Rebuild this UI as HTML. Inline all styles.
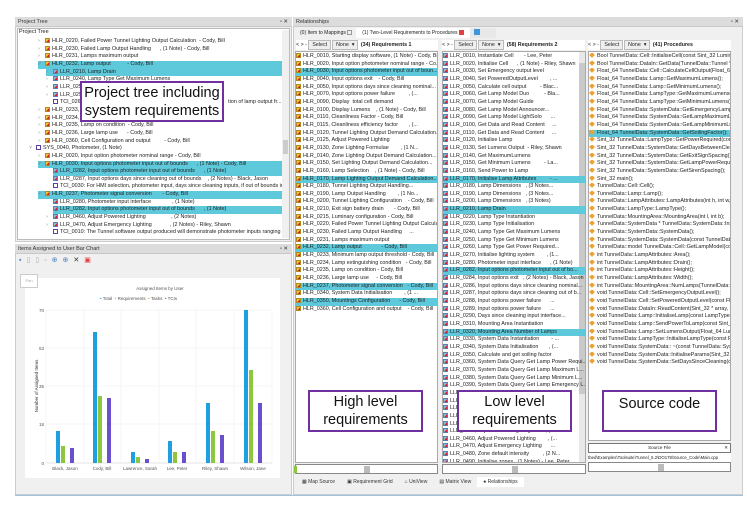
<!DOCTYPE html>
<html><head><meta charset="utf-8">
<style>
*{margin:0;padding:0;box-sizing:border-box}
body{width:747px;height:510px;background:#fff;font-family:"Liberation Sans",sans-serif;font-size:5.4px;color:#222;position:relative;overflow:hidden}
.a{position:absolute}
.hdr{background:#dcdcdc;border-bottom:1px solid #c8c8c8;height:10px;line-height:10px;padding-left:3px;font-size:5.5px;color:#333}
.list{position:absolute;background:#fff;border:1px solid #aaa;overflow:hidden}
.r{height:7.67px;line-height:7.67px;white-space:nowrap;overflow:hidden;position:relative}
.h{background:#5ec9db}
.i{display:inline-block;width:5px;height:5px;vertical-align:-1px;margin-right:2px;background:linear-gradient(135deg,#f3c53a 55%,#d2232a 55%);border:0.5px solid #b08a20}
.l{background:linear-gradient(135deg,#8fb8e0 55%,#d2232a 55%);border-color:#5a7fb0}
.t{background:#fff;border:1px solid #5a3fa0}
.p{display:inline-block;width:4px;height:4px;background:#f0a030;transform:rotate(45deg);margin:0 3px 0 1px;vertical-align:0}
.ar{display:inline-block;width:7px;color:#888}
.box{position:absolute;border:2px solid #7030a0;background:#fff;font-size:14.5px;text-align:center;color:#111;line-height:18px;white-space:nowrap;padding-top:1px}
.tb{position:absolute;height:10px;line-height:10px;font-size:5.3px;background:#fff}
.btn{display:inline-block;border:1px solid #bbb;background:#eee;padding:0 3px;line-height:8px;margin-right:1px}
.tab{display:inline-block;padding:0 6px;line-height:10px;font-size:5px;color:#333}
</style></head><body>

<!-- Project tree panel -->
<div class="a" style="left:15px;top:17px;width:277px;height:225px;background:#f0f0f0;border:1px solid #ccc"></div>
<div class="a hdr" style="left:15px;top:17px;width:277px">Project Tree<span style="position:absolute;right:4px">▫ ✕</span></div>
<div class="a" style="left:17px;top:28px;width:273px;height:212px;background:#fff;border:1px solid #bbb"></div>
<div class="a" style="left:19px;top:29px;font-size:5.5px">Project Tree</div>
<div class="a" style="left:282px;top:30px;width:7px;height:208px;background:#f0f0f0"></div>
<div class="a" style="left:283px;top:140px;width:5px;height:14px;background:#ccc"></div>
<div class="a" style="left:17px;top:38px;width:265px">
<div class="r" style="padding-left:21px"><span class="ar">›</span><span class="i"></span>HLR_0220, Failed Power Tunnel Lighting Output Calculation &nbsp;- Cody, Bill</div>
<div class="r" style="padding-left:21px"><span class="ar">›</span><span class="i"></span>HLR_0230, Failed Lamp Output Handling &nbsp;&nbsp;&nbsp;&nbsp;&nbsp;, (1 Note) - Cody, Bill</div>
<div class="r" style="padding-left:21px"><span class="ar">›</span><span class="i"></span>HLR_0231, Lamps maximum output</div>
<div class="r h" style="margin-left:21px"><span class="ar">˅</span><span class="i"></span>HLR_0232, Lamp output &nbsp;&nbsp;&nbsp;&nbsp;&nbsp;&nbsp;&nbsp;&nbsp;&nbsp;&nbsp;- Cody, Bill</div>
<div class="r h" style="margin-left:29px"><span class="ar">›</span><span class="i l"></span>LLR_0210, Lamp Drain</div>
<div class="r" style="padding-left:29px"><span class="ar">›</span><span class="i l"></span>LLR_0240, Lamp Type Get Maximum Lumens</div>
<div class="r" style="padding-left:29px"><span class="ar">›</span><span class="i l"></span>LLR_0250</div>
<div class="r" style="padding-left:29px"><span class="ar">›</span><span class="i l"></span>LLR_0290</div>
<div class="r" style="padding-left:36px"><span class="i t"></span>TCI_0260 <span style="padding-left:143px">tion of lamp output fr...</span></div>
<div class="r" style="padding-left:21px"><span class="ar">›</span><span class="i"></span>HLR_0233, Minimum lamp output threshold</div>
<div class="r" style="padding-left:21px"><span class="ar">›</span><span class="i"></span>HLR_0234, Lamp extinguishing condition</div>
<div class="r" style="padding-left:21px"><span class="ar">›</span><span class="i"></span>HLR_0235, Lamp on condition &nbsp;- Cody, Bill</div>
<div class="r" style="padding-left:21px"><span class="ar">›</span><span class="i"></span>HLR_0236, Large lamp use &nbsp;&nbsp;&nbsp;&nbsp;&nbsp;- Cody, Bill</div>
<div class="r" style="padding-left:21px"><span class="ar">›</span><span class="i"></span>HLR_0360, Cell Configuration and output &nbsp;&nbsp;&nbsp;&nbsp;&nbsp;&nbsp;&nbsp;&nbsp;- Cody, Bill</div>
<div class="r" style="padding-left:12px"><span class="ar">˅</span><span class="i t"></span>SYS_0040, Photometer, (1 Note)</div>
<div class="r" style="padding-left:21px"><span class="ar">›</span><span class="i"></span>HLR_0020, Input option photometer nominal range - Cody, Bill</div>
<div class="r h" style="margin-left:21px"><span class="ar">˅</span><span class="i"></span>HLR_0030, Input options photometer input out of bounds &nbsp;&nbsp;&nbsp;&nbsp;&nbsp;, (1 Note) - Cody, Bill</div>
<div class="r h" style="margin-left:36px"><span class="i l"></span>LLR_0282, Input options photometer input out of bounds &nbsp;&nbsp;&nbsp;&nbsp;&nbsp;, (1 Note)</div>
<div class="r" style="padding-left:36px"><span class="i l"></span>LLR_0287, Input options days since cleaning out of bounds &nbsp;&nbsp;&nbsp;, (2 Notes) - Black, Jason</div>
<div class="r" style="padding-left:36px"><span class="i t"></span>TCI_0030: For HMI selection, photometer input, days since cleaning inputs, if out of bounds in...</div>
<div class="r h" style="margin-left:21px"><span class="ar">˅</span><span class="i"></span>HLR_0237, Photometer signal conversion &nbsp;&nbsp;&nbsp;&nbsp;&nbsp;&nbsp;- Cody, Bill</div>
<div class="r" style="padding-left:36px"><span class="i l"></span>LLR_0280, Photometer input interface &nbsp;&nbsp;&nbsp;&nbsp;&nbsp;&nbsp;&nbsp;&nbsp;&nbsp;&nbsp;&nbsp;&nbsp;&nbsp;, (1 Note)</div>
<div class="r h" style="margin-left:36px"><span class="i l"></span>LLR_0282, Input options photometer input out of bounds &nbsp;&nbsp;&nbsp;&nbsp;&nbsp;, (1 Note)</div>
<div class="r" style="padding-left:29px"><span class="ar">›</span><span class="i l"></span>LLR_0460, Adjust Powered Lighting &nbsp;&nbsp;&nbsp;&nbsp;&nbsp;&nbsp;&nbsp;&nbsp;&nbsp;&nbsp;&nbsp;&nbsp;&nbsp;&nbsp;&nbsp;&nbsp;, (2 Notes)</div>
<div class="r" style="padding-left:29px"><span class="ar">›</span><span class="i l"></span>LLR_0470, Adjust Emergency Lighting &nbsp;&nbsp;&nbsp;&nbsp;&nbsp;&nbsp;&nbsp;&nbsp;&nbsp;&nbsp;&nbsp;, (2 Notes) - Riley, Shawn</div>
<div class="r" style="padding-left:36px"><span class="i t"></span>TCI_0010: The Tunnel software output produced will demonstrate photometer inputs ranging f...</div>
</div>
<div class="box" style="left:80px;top:81px;width:144px;height:41px">Project tree including<br>system requirements</div>

<!-- Chart panel -->
<div class="a" style="left:15px;top:244px;width:277px;height:251px;background:#f0f0f0;border:1px solid #ccc"></div>
<div class="a hdr" style="left:15px;top:244px;width:277px">Items Assigned to User Bar Chart<span style="position:absolute;right:4px">▫ ✕</span></div>
<div class="a" style="left:19px;top:256px;font-size:7px;letter-spacing:5px;color:#4a7fc0">▪<span style="color:#aaa">▯▯▫</span>⊕⊕<span style="color:#333">✕</span><span style="color:#e04040">▣</span></div>
<div class="a" style="left:25px;top:278px;width:255px;height:200px;background:#fff"></div>
<div class="a" style="left:20px;top:274px;width:18px;height:14px;border:1px solid #ccc;background:#fff;font-size:4px;color:#aaa;text-align:center;line-height:12px">Pan</div>
<div class="a" style="left:110px;top:286px;width:100px;text-align:center;font-size:4.5px;color:#555">Assigned Items by User</div>
<div class="a" style="left:100px;top:296px;font-size:4.5px;color:#555"><span style="color:#1ea0e0">•</span> Total &nbsp;<span style="color:#8dc63f">•</span> Requirements &nbsp;<span style="color:#f0a030">•</span> Tasks &nbsp;<span style="color:#6a4fcf">•</span> TCIs</div>
<svg class="a" style="left:0;top:0" width="292" height="495">
<g stroke="#eee" stroke-width="0.6">
<line x1="46" y1="310" x2="272" y2="310"/><line x1="46" y1="348" x2="272" y2="348"/><line x1="46" y1="386" x2="272" y2="386"/><line x1="46" y1="424" x2="272" y2="424"/><line x1="46" y1="463" x2="272" y2="463" stroke="#ccc"/>
<line x1="46" y1="310" x2="46" y2="463"/><line x1="84" y1="310" x2="84" y2="463"/><line x1="121" y1="310" x2="121" y2="463"/><line x1="159" y1="310" x2="159" y2="463"/><line x1="196" y1="310" x2="196" y2="463"/><line x1="234" y1="310" x2="234" y2="463"/><line x1="272" y1="310" x2="272" y2="463"/>
</g>
<g fill="#1ea0e0"><rect x="56" y="431" width="4" height="32"/><rect x="93" y="332" width="4" height="131"/><rect x="131" y="452" width="4" height="11"/><rect x="168" y="441" width="4" height="22"/><rect x="206" y="403" width="4" height="60"/><rect x="244" y="310" width="4" height="153"/></g>
<g fill="#8dc63f"><rect x="61" y="446" width="4" height="17"/><rect x="98" y="396" width="4" height="67"/><rect x="136" y="457" width="4" height="6"/><rect x="173" y="452" width="4" height="11"/><rect x="211" y="431" width="4" height="32"/><rect x="249" y="370" width="4" height="93"/></g>
<g fill="#6a4fcf"><rect x="70" y="448" width="4" height="15"/><rect x="107" y="398" width="4" height="65"/><rect x="145" y="459" width="4" height="4"/><rect x="182" y="452" width="4" height="11"/><rect x="220" y="435" width="4" height="28"/><rect x="258" y="403" width="4" height="60"/></g>
<g font-family="Liberation Sans" font-size="4.5" fill="#555" text-anchor="end"><text x="44" y="312">70</text><text x="44" y="350">53</text><text x="44" y="388">35</text><text x="44" y="426">18</text><text x="44" y="465">0</text></g>
<g font-family="Liberation Sans" font-size="4.5" fill="#555" text-anchor="middle"><text x="65" y="470">Black, Jason</text><text x="102" y="470">Cody, Bill</text><text x="140" y="470">Lawrence, Sarah</text><text x="177" y="470">Lee, Peter</text><text x="215" y="470">Riley, Shawn</text><text x="253" y="470">Wilson, Jane</text></g>
<text transform="translate(38,386) rotate(-90)" font-family="Liberation Sans" font-size="4.5" fill="#333" text-anchor="middle">Number of Assigned Items</text>
</svg>

<!-- Relationships -->
<div class="a" style="left:293px;top:17px;width:450px;height:478px;background:#f0f0f0;border:1px solid #ccc"></div>
<div class="a hdr" style="left:293px;top:17px;width:450px">Relationships<span style="position:absolute;right:4px">▫ ✕</span></div>
<div class="a" style="left:296px;top:28px;height:10px;line-height:10px;font-size:5px">
<span style="display:inline-block;padding:0 4px">(0) Item to Mappings <span style="display:inline-block;width:5px;height:5px;border:1px solid #999;vertical-align:-1px"></span></span><span style="display:inline-block;padding:0 6px;background:#fff">(1) Two-Level Requirements to Procedures <span style="display:inline-block;width:5px;height:5px;background:#e04040;vertical-align:-1px"></span></span><span style="display:inline-block;padding:0 4px;background:#e8e8e8;width:26px"><span style="display:inline-block;width:6px;height:6px;background:#3a9ad9;vertical-align:-1px"></span></span>
</div>
<div class="tb" style="left:296px;top:40px;width:142px">&lt; &gt; - <span class="btn">Select</span><span class="btn">None &nbsp;▾</span> <b>(34) Requirements 1</b></div>
<div class="tb" style="left:442px;top:40px;width:143px">&lt; &gt; - <span class="btn">Select</span><span class="btn">None &nbsp;▾</span> <b>(58) Requirements 2</b></div>
<div class="tb" style="left:588px;top:40px;width:143px">&lt; &gt; - <span class="btn">Select</span><span class="btn">None &nbsp;▾</span> <b>(41) Procedures</b></div>

<div class="list" style="left:295px;top:51px;width:143px;height:412px;padding-top:1px">
<div class="r"><span class="i"></span>HLR_0010, Starting display software, (1 Note) - Cody, Bill</div>
<div class="r"><span class="i"></span>HLR_0020, Input option photometer nominal range - Co...</div>
<div class="r h"><span class="i"></span>HLR_0030, Input options photometer input out of boun...</div>
<div class="r"><span class="i"></span>HLR_0040, Input options exit &nbsp;&nbsp;&nbsp;- Cody, Bill</div>
<div class="r"><span class="i"></span>HLR_0050, Input options days since cleaning nominal...</div>
<div class="r"><span class="i"></span>HLR_0070, Input options power failure &nbsp;&nbsp;&nbsp;&nbsp;&nbsp;&nbsp;&nbsp;&nbsp;, (...</div>
<div class="r"><span class="i"></span>HLR_0090, Display &nbsp;total cell demand</div>
<div class="r"><span class="i"></span>HLR_0100, Display Lumens &nbsp;&nbsp;&nbsp;, (1 Note) - Cody, Bill</div>
<div class="r"><span class="i"></span>HLR_0110, Cleanliness Factor - Cody, Bill</div>
<div class="r"><span class="i"></span>HLR_0115, Cleanliness efficiency factor &nbsp;&nbsp;&nbsp;&nbsp;&nbsp;&nbsp;, (...</div>
<div class="r"><span class="i"></span>HLR_0120, Tunnel Lighting Output Demand Calculation...</div>
<div class="r"><span class="i"></span>HLR_0125, Adjust Powered Lighting</div>
<div class="r"><span class="i"></span>HLR_0130, Zone Lighting Formulae &nbsp;&nbsp;&nbsp;&nbsp;&nbsp;&nbsp;&nbsp;, (1 N...</div>
<div class="r"><span class="i"></span>HLR_0140, Zone Lighting Output Demand Calculation...</div>
<div class="r"><span class="i"></span>HLR_0150, Set Lighting Output Demand Calculation...</div>
<div class="r"><span class="i"></span>HLR_0160, Lamp Selection &nbsp;&nbsp;&nbsp;, (1 Note) - Cody, Bill</div>
<div class="r h"><span class="i"></span>HLR_0170, Lamp Lighting Output Demand Calculation...</div>
<div class="r"><span class="i"></span>HLR_0180, Tunnel Lighting Output Handling...</div>
<div class="r"><span class="i"></span>HLR_0190, Lamp Output Handling &nbsp;&nbsp;&nbsp;&nbsp;&nbsp;&nbsp;&nbsp;, (1 No...</div>
<div class="r"><span class="i"></span>HLR_0200, Tunnel Lighting Configuration &nbsp;&nbsp;&nbsp;- Cody, Bill</div>
<div class="r"><span class="i"></span>HLR_0210, Exit sign battery drain &nbsp;&nbsp;&nbsp;&nbsp;&nbsp;&nbsp;- Cody, Bill</div>
<div class="r"><span class="i"></span>HLR_0215, Luminary configuration - Cody, Bill</div>
<div class="r"><span class="i"></span>HLR_0220, Failed Power Tunnel Lighting Output Calcula...</div>
<div class="r"><span class="i"></span>HLR_0230, Failed Lamp Output Handling &nbsp;&nbsp;&nbsp;&nbsp;...</div>
<div class="r"><span class="i"></span>HLR_0231, Lamps maximum output</div>
<div class="r h"><span class="i"></span>HLR_0232, Lamp output &nbsp;&nbsp;&nbsp;&nbsp;&nbsp;&nbsp;&nbsp;&nbsp;&nbsp;&nbsp;&nbsp;&nbsp;- Cody, Bill</div>
<div class="r"><span class="i"></span>HLR_0233, Minimum lamp output threshold - Cody, Bill</div>
<div class="r"><span class="i"></span>HLR_0234, Lamp extinguishing condition &nbsp;&nbsp;- Cody, Bill</div>
<div class="r"><span class="i"></span>HLR_0235, Lamp on condition - Cody, Bill</div>
<div class="r"><span class="i"></span>HLR_0236, Large lamp use &nbsp;&nbsp;&nbsp;&nbsp;- Cody, Bill</div>
<div class="r h"><span class="i"></span>HLR_0237, Photometer signal conversion &nbsp;&nbsp;- Cody, Bill</div>
<div class="r"><span class="i"></span>HLR_0340, System Data Initialisation &nbsp;&nbsp;&nbsp;&nbsp;&nbsp;&nbsp;&nbsp;, (1 ...</div>
<div class="r h"><span class="i"></span>HLR_0350, Mountings Configuration &nbsp;&nbsp;&nbsp;&nbsp;&nbsp;- Cody, Bill</div>
<div class="r"><span class="i"></span>HLR_0360, Cell Configuration and output &nbsp;&nbsp;&nbsp;- Cody, Bill</div>
</div>

<div class="list" style="left:442px;top:51px;width:144px;height:412px;padding-top:1px">
<div class="a" style="right:0;top:0;width:6px;height:410px;background:#e8e8e8"></div>
<div class="a" style="right:0;top:11px;width:6px;height:331px;background:#c9c9c9"></div>
<div class="r"><span class="i l"></span>LLR_0010, Instantiate Cell &nbsp;&nbsp;&nbsp;&nbsp;&nbsp;&nbsp;- Lee, Peter</div>
<div class="r"><span class="i l"></span>LLR_0020, Initialise Cell &nbsp;&nbsp;&nbsp;&nbsp;&nbsp;, (1 Note) - Riley, Shawn</div>
<div class="r"><span class="i l"></span>LLR_0030, Set Emergency output level</div>
<div class="r"><span class="i l"></span>LLR_0040, Set PoweredOutputLevel &nbsp;&nbsp;&nbsp;&nbsp;&nbsp;&nbsp;&nbsp;, ...</div>
<div class="r"><span class="i l"></span>LLR_0050, Calculate cell output &nbsp;&nbsp;&nbsp;&nbsp;&nbsp;&nbsp;&nbsp;&nbsp;- Blac...</div>
<div class="r"><span class="i l"></span>LLR_0060, Get Lamp Model Duo &nbsp;&nbsp;&nbsp;&nbsp;&nbsp;&nbsp;&nbsp;&nbsp;&nbsp;- Bla...</div>
<div class="r"><span class="i l"></span>LLR_0070, Get Lamp Model Guide</div>
<div class="r"><span class="i l"></span>LLR_0080, Get Lamp Model Announcer...</div>
<div class="r"><span class="i l"></span>LLR_0090, Get Lamp Model LightSolo &nbsp;&nbsp;&nbsp;&nbsp;&nbsp;...</div>
<div class="r"><span class="i l"></span>LLR_0100, Get Data and Read Content &nbsp;&nbsp;&nbsp;&nbsp;...</div>
<div class="r"><span class="i l"></span>LLR_0110, Get Data and Read Content &nbsp;&nbsp;&nbsp;&nbsp;...</div>
<div class="r"><span class="i l"></span>LLR_0120, Initialise Lamp</div>
<div class="r"><span class="i l"></span>LLR_0130, Set Lumens Output &nbsp;- Riley, Shawn</div>
<div class="r"><span class="i l"></span>LLR_0140, Get MaximumLumens</div>
<div class="r"><span class="i l"></span>LLR_0150, Get Minimum Lumens &nbsp;&nbsp;&nbsp;&nbsp;&nbsp;&nbsp;&nbsp;&nbsp;- La...</div>
<div class="r"><span class="i l"></span>LLR_0160, Send Power to Lamp</div>
<div class="r h"><span class="i l"></span>LLR_0170, Initialise Lamp Attributes &nbsp;&nbsp;&nbsp;&nbsp;&nbsp;&nbsp;&nbsp;&nbsp;- ...</div>
<div class="r"><span class="i l"></span>LLR_0180, Lamp Dimensions &nbsp;&nbsp;, (3 Notes...</div>
<div class="r"><span class="i l"></span>LLR_0190, Lamp Dimensions &nbsp;&nbsp;, (3 Notes...</div>
<div class="r"><span class="i l"></span>LLR_0200, Lamp Dimensions &nbsp;&nbsp;, (3 Notes)</div>
<div class="r h"><span class="i l"></span>LLR_0210, Lamp Drain</div>
<div class="r"><span class="i l"></span>LLR_0220, Lamp Type Instantiation</div>
<div class="r"><span class="i l"></span>LLR_0230, Lamp Type Initialisation</div>
<div class="r"><span class="i l"></span>LLR_0240, Lamp Type Get Maximum Lumens</div>
<div class="r"><span class="i l"></span>LLR_0250, Lamp Type Get Minimum Lumens</div>
<div class="r"><span class="i l"></span>LLR_0260, Lamp Type Get Power Required...</div>
<div class="r"><span class="i l"></span>LLR_0270, Initialise lighting system &nbsp;&nbsp;&nbsp;&nbsp;&nbsp;&nbsp;&nbsp;, (1...</div>
<div class="r"><span class="i l"></span>LLR_0280, Photometer input interface &nbsp;&nbsp;&nbsp;&nbsp;&nbsp;, (1 Note)</div>
<div class="r h"><span class="i l"></span>LLR_0282, Input options photometer input out of bo...</div>
<div class="r"><span class="i l"></span>LLR_0284, Input options exit &nbsp;&nbsp;, (2 Notes) - Black, Jason</div>
<div class="r"><span class="i l"></span>LLR_0286, Input options days since cleaning nominal...</div>
<div class="r"><span class="i l"></span>LLR_0287, Input options days since cleaning out of b...</div>
<div class="r"><span class="i l"></span>LLR_0288, Input options power failure &nbsp;&nbsp;&nbsp;&nbsp;&nbsp;...</div>
<div class="r"><span class="i l"></span>LLR_0289, Input options power failure &nbsp;&nbsp;&nbsp;&nbsp;&nbsp;...</div>
<div class="r"><span class="i l"></span>LLR_0290, Days since cleaning input interface...</div>
<div class="r"><span class="i l"></span>LLR_0310, Mounting Area Instantiation</div>
<div class="r h"><span class="i l"></span>LLR_0320, Mounting Area Number of Lamps</div>
<div class="r"><span class="i l"></span>LLR_0330, System Data Instantiation &nbsp;&nbsp;&nbsp;&nbsp;&nbsp;&nbsp;&nbsp;- ...</div>
<div class="r"><span class="i l"></span>LLR_0340, System Data Initialisation &nbsp;&nbsp;&nbsp;&nbsp;&nbsp;&nbsp;, (...</div>
<div class="r"><span class="i l"></span>LLR_0350, Calculate and get soiling factor</div>
<div class="r"><span class="i l"></span>LLR_0360, System Data Query Get Lamp Power Requi...</div>
<div class="r"><span class="i l"></span>LLR_0370, System Data Query Get Lamp Maximum L...</div>
<div class="r"><span class="i l"></span>LLR_0380, System Data Query Get Lamp Minimum L...</div>
<div class="r"><span class="i l"></span>LLR_0390, System Data Query Get Lamp Emergency L...</div>
<div class="r"><span class="i l"></span>LLR_0400, System Data Query</div>
<div class="r"><span class="i l"></span>LLR_0410, System Data Query</div>
<div class="r"><span class="i l"></span>LLR_0420, Adjust Lighting</div>
<div class="r"><span class="i l"></span>LLR_0430, Adjust Lighting</div>
<div class="r"><span class="i l"></span>LLR_0440, Adjust Lighting</div>
<div class="r"><span class="i l"></span>LLR_0450, Adjust Tunnel Lighting &nbsp;&nbsp;&nbsp;&nbsp;&nbsp;&nbsp;&nbsp;&nbsp;&nbsp;, (2 ...</div>
<div class="r"><span class="i l"></span>LLR_0460, Adjust Powered Lighting &nbsp;&nbsp;&nbsp;&nbsp;&nbsp;&nbsp;&nbsp;, (...</div>
<div class="r"><span class="i l"></span>LLR_0470, Adjust Emergency Lighting &nbsp;&nbsp;&nbsp;&nbsp;&nbsp;...</div>
<div class="r"><span class="i l"></span>LLR_0480, Zone default intensity &nbsp;&nbsp;&nbsp;&nbsp;&nbsp;&nbsp;&nbsp;&nbsp;, (2 N...</div>
<div class="r"><span class="i l"></span>LLR_0490, Initialise zones &nbsp;&nbsp;(1 Notes) - Lee, Peter</div>
</div>

<div class="list" style="left:588px;top:51px;width:143px;height:390px;padding-top:1px">
<div class="r"><span class="p"></span>Bool TunnelData::Cell::InitialiseCell(const Sint_32 Luminai...</div>
<div class="r"><span class="p"></span>Bool TunnelData::DataIn::GetData(TunnelData::Tunnel * p...</div>
<div class="r"><span class="p"></span>Float_64 TunnelData::Cell::CalculateCellOutput(Float_64 L...</div>
<div class="r"><span class="p"></span>Float_64 TunnelData::Lamp::GetMaximumLumens();</div>
<div class="r"><span class="p"></span>Float_64 TunnelData::Lamp::GetMinimumLumens();</div>
<div class="r"><span class="p"></span>Float_64 TunnelData::LampType::GetMaximumLumens();</div>
<div class="r"><span class="p"></span>Float_64 TunnelData::LampType::GetMinimumLumens();</div>
<div class="r"><span class="p"></span>Float_64 TunnelData::SystemData::GetEmergencyLampLu...</div>
<div class="r"><span class="p"></span>Float_64 TunnelData::SystemData::GetLampMaximumLu...</div>
<div class="r"><span class="p"></span>Float_64 TunnelData::SystemData::GetLampMinimumLu...</div>
<div class="r h"><span class="p"></span>Float_64 TunnelData::SystemData::GetSoilingFactor();</div>
<div class="r"><span class="p"></span>Sint_32 TunnelData::LampType::GetPowerRequired(const ...</div>
<div class="r"><span class="p"></span>Sint_32 TunnelData::SystemData::GetDaysBetweenCleanin...</div>
<div class="r"><span class="p"></span>Sint_32 TunnelData::SystemData::GetExitSignSpacing();</div>
<div class="r"><span class="p"></span>Sint_32 TunnelData::SystemData::GetLampPowerRequired...</div>
<div class="r"><span class="p"></span>Sint_32 TunnelData::SystemData::GetSirenSpacing();</div>
<div class="r"><span class="p"></span>Sint_32 main();</div>
<div class="r"><span class="p"></span>TunnelData::Cell::Cell();</div>
<div class="r"><span class="p"></span>TunnelData::Lamp::Lamp();</div>
<div class="r"><span class="p"></span>TunnelData::LampAttributes::LampAttributes(int h, int w, ...</div>
<div class="r"><span class="p"></span>TunnelData::LampType::LampType();</div>
<div class="r"><span class="p"></span>TunnelData::MountingArea::MountingArea(int l, int b);</div>
<div class="r"><span class="p"></span>TunnelData::SystemData * TunnelData::SystemData::Insta...</div>
<div class="r"><span class="p"></span>TunnelData::SystemData::SystemData();</div>
<div class="r"><span class="p"></span>TunnelData::SystemData::SystemData(const TunnelData::...</div>
<div class="r"><span class="p"></span>TunnelData::model TunnelData::Cell::GetLampModel(con...</div>
<div class="r"><span class="p"></span>int TunnelData::LampAttributes::Area();</div>
<div class="r"><span class="p"></span>int TunnelData::LampAttributes::Drain();</div>
<div class="r"><span class="p"></span>int TunnelData::LampAttributes::Height();</div>
<div class="r"><span class="p"></span>int TunnelData::LampAttributes::Width();</div>
<div class="r"><span class="p"></span>int TunnelData::MountingArea::NumLamps(TunnelData::...</div>
<div class="r"><span class="p"></span>void TunnelData::Cell::SetEmergencyOutputLevel();</div>
<div class="r"><span class="p"></span>void TunnelData::Cell::SetPoweredOutputLevel(const Flo...</div>
<div class="r"><span class="p"></span>void TunnelData::DataIn::ReadContent(Sint_32 * array, ch...</div>
<div class="r"><span class="p"></span>void TunnelData::Lamp::InitialiseLamp(const LampTypel...</div>
<div class="r"><span class="p"></span>void TunnelData::Lamp::SendPowerToLamp(const Sint_3...</div>
<div class="r"><span class="p"></span>void TunnelData::Lamp::SetLumensOutput(Float_64 Lum...</div>
<div class="r"><span class="p"></span>void TunnelData::LampType::InitialiseLampType(const Fl...</div>
<div class="r"><span class="p"></span>void TunnelData::SystemData:: ~(const TunnelData::Syste...</div>
<div class="r"><span class="p"></span>void TunnelData::SystemData::InitialiseParams(Sint_32 * p...</div>
<div class="r"><span class="p"></span>void TunnelData::SystemData::SetDaysSinceCleaning(con...</div>
</div>
<div class="a" style="left:588px;top:443px;width:143px;height:10px;border:1px solid #777;background:#fff;text-align:center;line-height:8px;font-size:4.5px">Source File<span style="position:absolute;right:2px">✕</span></div>
<div class="a" style="left:588px;top:453px;width:143px;height:9px;background:#fff;font-size:4.3px;line-height:9px;white-space:nowrap;overflow:hidden">tbed\Examples\Toolsuite\Tunnel_5.2\DO178\Source_Code\Main.cpp</div>

<div class="box" style="left:308px;top:390px;width:115px;height:42px">High level<br>requirements</div>
<div class="box" style="left:457px;top:390px;width:115px;height:42px">Low level<br>requirements</div>
<div class="box" style="left:602px;top:390px;width:115px;height:42px;line-height:22px">Source code</div>

<div class="a" style="left:295px;top:464px;width:143px;height:10px;background:#fff;border:1px solid #888"><span style="position:absolute;left:-2px;top:1px;width:3px;height:7px;background:#8dc63f"></span><span style="position:absolute;left:68px;top:1px;width:6px;height:7px;background:#bbb"></span></div>
<div class="a" style="left:442px;top:464px;width:144px;height:10px;background:#fff;border:1px solid #888"><span style="position:absolute;left:69px;top:1px;width:6px;height:7px;background:#bbb"></span></div>
<div class="a" style="left:588px;top:462px;width:143px;height:10px;background:#fff;border:1px solid #888"><span style="position:absolute;left:69px;top:1px;width:6px;height:7px;background:#bbb"></span></div>

<div class="a" style="left:296px;top:477px;height:10px">
<span class="tab">▦ Map Source</span><span class="tab">▣ Requirement Grid</span><span class="tab">⌂ UniView</span><span class="tab">▤ Matrix View</span><span class="tab" style="background:#fff">● Relationships</span>
</div>
<div class="a" style="left:15px;top:495px;width:728px;height:1px;background:#9ec3e0"></div>
</body></html>
